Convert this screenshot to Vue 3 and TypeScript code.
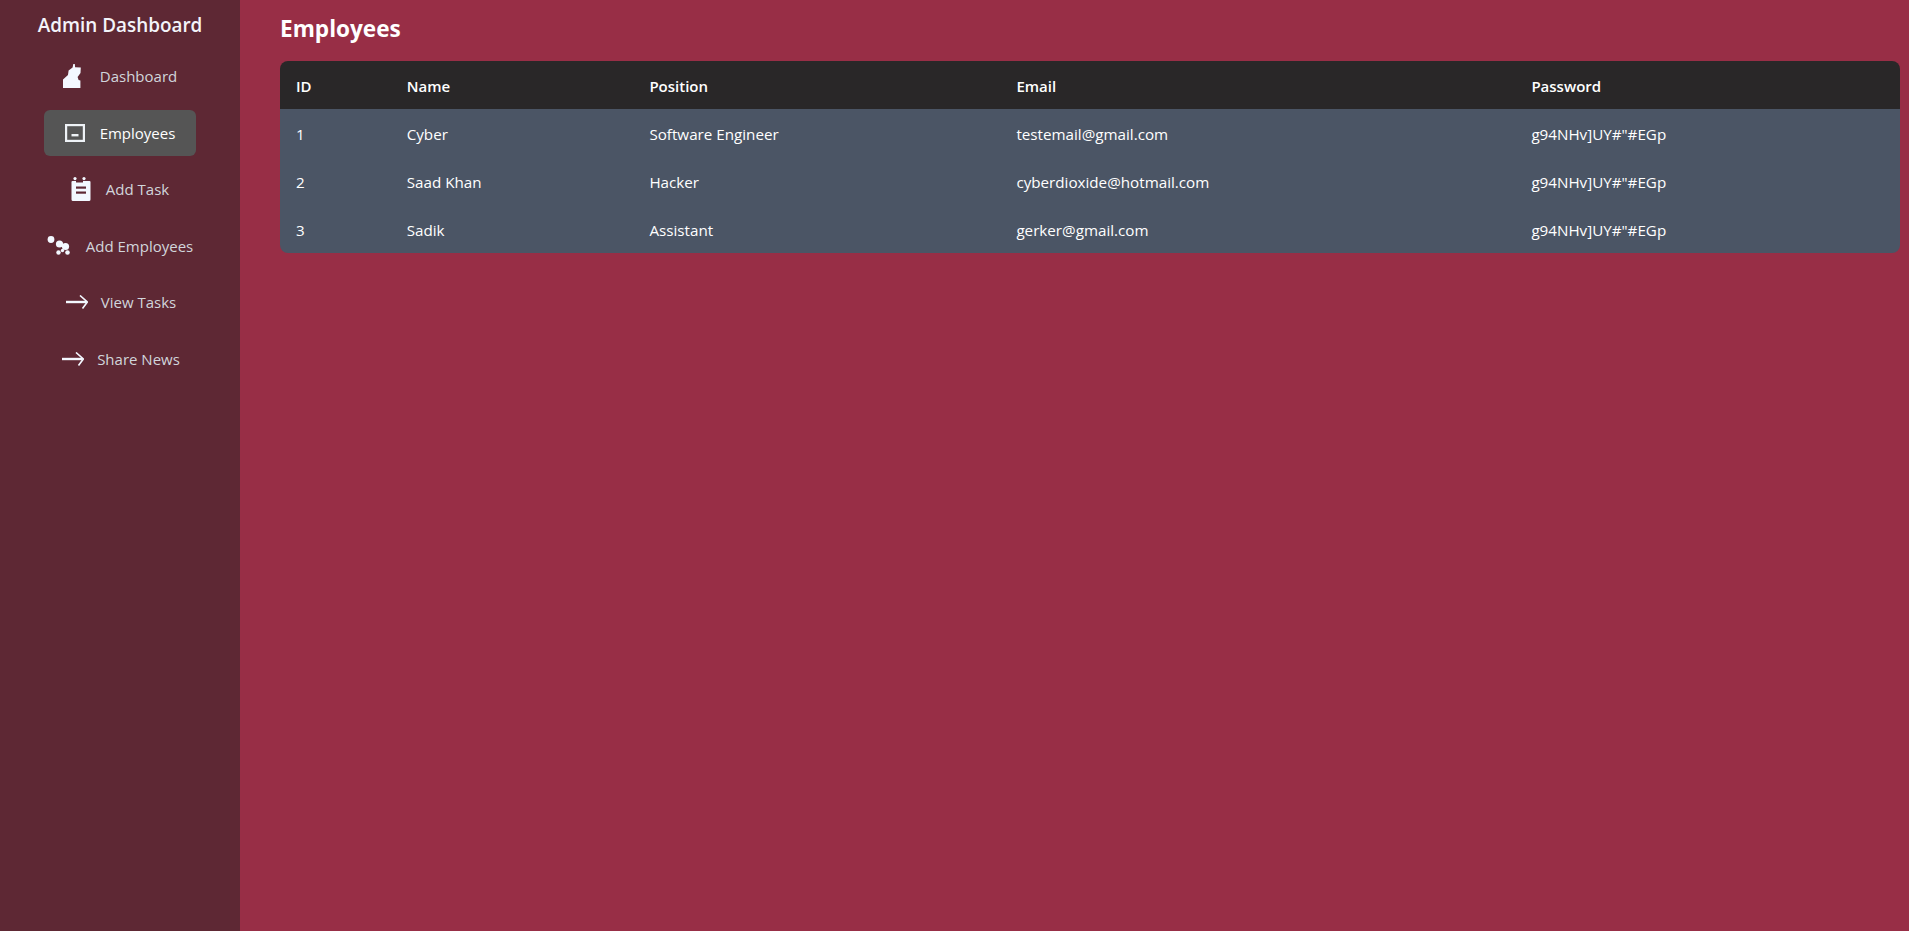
<script setup lang="ts">
interface Employee { id: number; name: string; position: string; email: string; password: string }
const employees: Employee[] = [
  { id: 1, name: 'Cyber', position: 'Software Engineer', email: 'testemail@gmail.com', password: 'g94NHv]UY#"#EGp' },
  { id: 2, name: 'Saad Khan', position: 'Hacker', email: 'cyberdioxide@hotmail.com', password: 'g94NHv]UY#"#EGp' },
  { id: 3, name: 'Sadik', position: 'Assistant', email: 'gerker@gmail.com', password: 'g94NHv]UY#"#EGp' },
]
</script>

<template>
  <div class="layout">
    <aside class="sidebar">
      <h2 class="brand">Admin Dashboard</h2>
      <nav class="nav">
        <a class="link">
          <svg class="icon" width="22" height="24" viewBox="0 0 22 24"><path fill="#f3f8ff" d="M10.3 0 H11.8 L12.1 3.3 L17.8 3.6 L17.5 9 L14.6 13 L15.6 16 L17.4 16.4 L17.4 24 L0 24 L0 15.5 L5 11 L5.6 6.5 L9.6 3.6 Z" /></svg>
          <span>Dashboard</span>
        </a>
        <a class="link active">
          <svg class="icon" width="20" height="18" viewBox="0 0 20 18"><rect x="1.1" y="1.1" width="17.8" height="15.8" fill="none" stroke="#eef2f6" stroke-width="2.2" /><rect x="6.5" y="10" width="7" height="2.4" fill="#eef2f6" /></svg>
          <span class="shift">Employees</span>
        </a>
        <a class="link">
          <svg class="icon" width="20" height="24" viewBox="0 0 20 24"><circle cx="4" cy="1.6" r="1.6" fill="#f3f8ff" /><circle cx="13" cy="1.6" r="1.6" fill="#f3f8ff" /><path fill="#f3f8ff" d="M1.5 4 H5 V5.5 H12 V4 H18.5 A1 1 0 0 1 19.5 5 V22.5 A1.5 1.5 0 0 1 18 24 H2 A1.5 1.5 0 0 1 0.5 22.5 V5 A1 1 0 0 1 1.5 4 Z" /><rect x="5" y="9.5" width="10" height="2.2" fill="#5e2834" /><rect x="5" y="14.5" width="10" height="2.2" fill="#5e2834" /></svg>
          <span>Add Task</span>
        </a>
        <a class="link">
          <svg class="icon" width="24" height="20" viewBox="0 0 24 20"><g fill="#f3f8ff"><circle cx="4" cy="3.5" r="3.4" /><circle cx="12.5" cy="8" r="3.6" /><circle cx="18.5" cy="10.5" r="3.6" /><circle cx="11.5" cy="16.5" r="2.2" /><circle cx="20.5" cy="16.5" r="2.3" /><circle cx="15.5" cy="14.5" r="1.7" /></g></svg>
          <span>Add Employees</span>
        </a>
        <a class="link tight">
          <svg class="icon" width="24" height="14" viewBox="0 0 24 14"><path d="M2 7 H22.5" stroke="#f3f8ff" stroke-width="2.4" fill="none" /><path d="M16 0.5 L23.3 7 L18.5 13.5" stroke="#f3f8ff" stroke-width="1.6" fill="none" /></svg>
          <span>View Tasks</span>
        </a>
        <a class="link tight">
          <svg class="icon" width="24" height="14" viewBox="0 0 24 14"><path d="M2 7 H22.5" stroke="#f3f8ff" stroke-width="2.4" fill="none" /><path d="M16 0.5 L23.3 7 L18.5 13.5" stroke="#f3f8ff" stroke-width="1.6" fill="none" /></svg>
          <span>Share News</span>
        </a>
      </nav>
    </aside>
    <main class="main">
      <h1 class="title">Employees</h1>
      <div class="table-wrap">
        <table class="table">
          <colgroup>
            <col class="c-id" /><col class="c-name" /><col class="c-pos" /><col class="c-email" /><col />
          </colgroup>
          <thead>
            <tr><th>ID</th><th>Name</th><th>Position</th><th>Email</th><th>Password</th></tr>
          </thead>
          <tbody>
            <tr v-for="e in employees" :key="e.id">
              <td>{{ e.id }}</td><td>{{ e.name }}</td><td>{{ e.position }}</td><td>{{ e.email }}</td><td>{{ e.password }}</td>
            </tr>
          </tbody>
        </table>
      </div>
    </main>
  </div>
</template>

<style>
html, body { margin: 0; background: #982e46; }
</style>

<style scoped>
.layout {
  display: flex;
  min-height: 931px;
  font-family: "Open Sans", "Noto Sans", sans-serif;
  font-size: 15.2px;
  color: #fff;
  background: #982e46;
}
.sidebar {
  width: 240px;
  flex: none;
  background: #5e2834;
  display: flex;
  flex-direction: column;
  align-items: center;
}
.brand {
  margin: 11px 0 0;
  font-size: 18.9px;
  line-height: 28px;
  font-weight: 600;
  color: #f3f4fa;
}
.nav {
  margin-top: 14px;
  display: flex;
  flex-direction: column;
  gap: 10.6px;
  width: 152px;
}
.link {
  height: 46px;
  display: flex;
  align-items: center;
  justify-content: center;
  gap: 15px;
  border-radius: 6px;
  color: #d1d5db;
  font-size: 15px;
  white-space: nowrap;
}
.tight { gap: 13px; }
.icon { flex: none; }
.active { background: #555555; color: #fff; }
.main {
  flex: 1;
  min-width: 0;
  padding: 0 9px 0 40px;
}
.title {
  margin: 12px 0 0;
  font-size: 22.6px;
  line-height: 34px;
  font-weight: 700;
  color: #fff;
}
.table-wrap {
  margin-top: 15px;
  border-radius: 8px;
  overflow: hidden;
}
.table {
  width: 100%;
  border-collapse: collapse;
  table-layout: fixed;
}
.c-id { width: 110.7px; }
.c-name { width: 242.7px; }
.c-pos { width: 367px; }
.c-email { width: 515px; }
th, td {
  box-sizing: border-box;
  height: 48px;
  padding: 2px 16px 0;
  text-align: left;
}
th { background: #292728; font-size: 15px; font-weight: 600; color: #fff; }
td { background: #4b5565; color: #fff; }
</style>
